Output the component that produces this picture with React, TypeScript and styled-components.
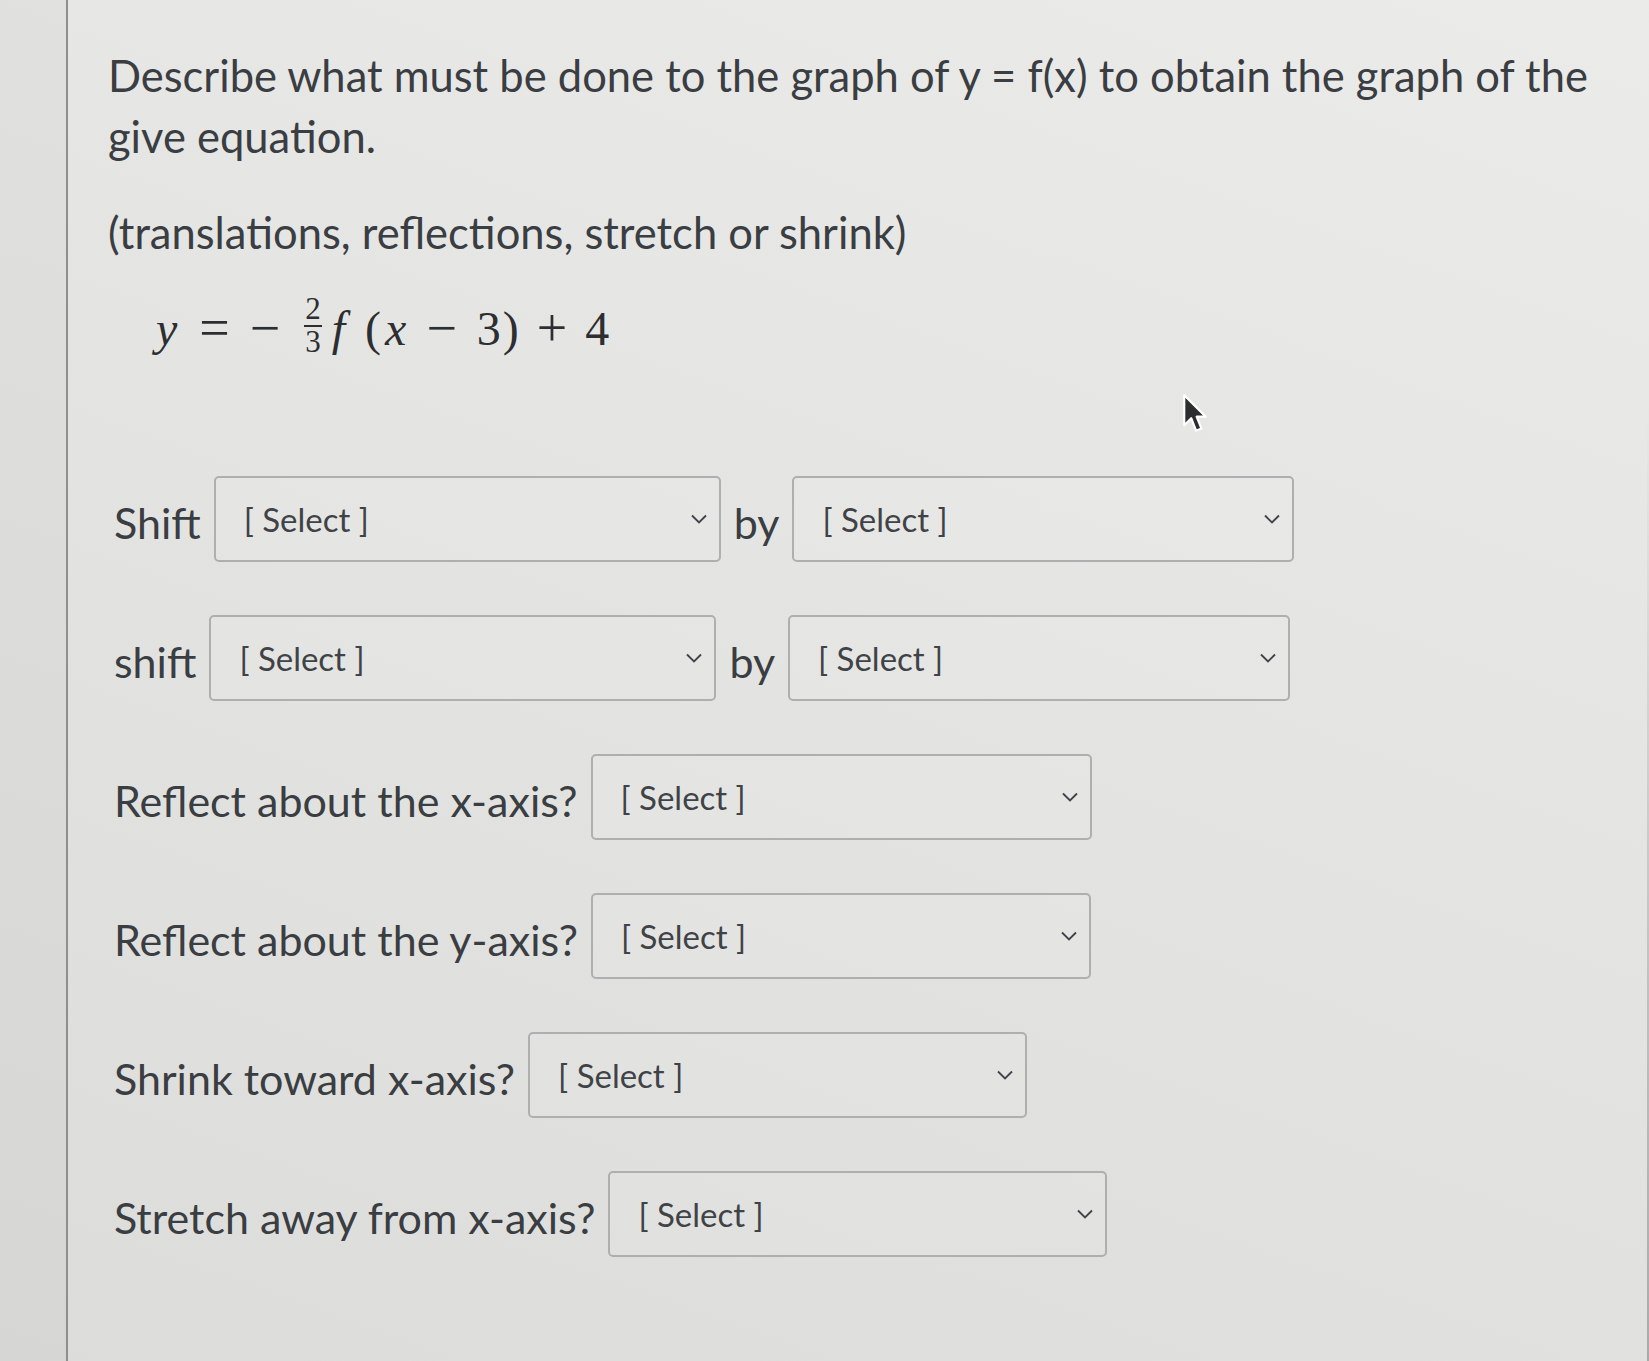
import React from "react";
import styled, { createGlobalStyle } from "styled-components";

const GlobalStyle = createGlobalStyle`
  html, body {
    margin: 0;
    padding: 0;
  }
  body {
    background: #e2e3e1;
    font-family: Lato, "Noto Sans", sans-serif;
    color: #3a3d41;
  }
`;

const Page = styled.div`
  position: relative;
  display: flex;
  min-height: 1361px;
  background: linear-gradient(200deg, #ebebea 0%, #e4e5e3 45%, #dcdddb 100%);
  overflow: hidden;
`;

const Rail = styled.div`
  width: 66px;
  flex-shrink: 0;
  background: rgba(0, 0, 0, 0.025);
  border-right: 2px solid #8e8f8f;
`;

const Content = styled.main`
  flex: 1;
  padding: 45px 0 0 40px;
  border-right: 2px solid;
  border-image: linear-gradient(180deg, rgba(180, 181, 180, 0) 30%, #a9aaa9 100%) 1;
`;

const Question = styled.p`
  margin: 0;
  max-width: 1540px;
  font-size: 43.5px;
  line-height: 61px;
`;

const Hint = styled(Question)`
  margin-top: 35px;
`;

const Equation = styled.div`
  display: flex;
  align-items: center;
  margin-top: 30px;
  padding-left: 48px;
  height: 70px;
  font-family: "Liberation Serif", "DejaVu Serif", serif;
  font-size: 48px;
  color: #2c2e31;
`;

const Sym = styled.span<{ $l?: number; $italic?: boolean; $size?: number }>`
  margin-left: ${(p) => p.$l ?? 0}px;
  font-style: ${(p) => (p.$italic ? "italic" : "normal")};
  font-size: ${(p) => (p.$size ? `${p.$size}px` : "inherit")};
`;

const Frac = styled.span`
  display: inline-flex;
  flex-direction: column;
  align-items: center;
  font-size: 31px;
  line-height: 29px;
  margin: 0 10px 0 24px;
  transform: translateY(-3px);
`;

const FracTop = styled.span`
  padding: 0 1px 2px;
  border-bottom: 2px solid #2c2e31;
`;

const Form = styled.div`
  display: flex;
  flex-direction: column;
  gap: 52px;
  margin-top: 112px;
  padding-left: 6px;
`;

const Row = styled.div`
  display: flex;
  align-items: center;
  gap: 13px;
  height: 87px;
`;

const Label = styled.span`
  font-size: 43px;
  line-height: 50px;
  padding-top: 8px;
  white-space: nowrap;
`;

const SelectBox = styled.div<{ $width: number }>`
  box-sizing: border-box;
  display: flex;
  align-items: center;
  justify-content: space-between;
  width: ${(p) => p.$width}px;
  height: 86px;
  padding: 0 12px 0 28px;
  border: 2px solid #aeafae;
  border-radius: 5px;
  background: rgba(255, 255, 255, 0.08);
  font-size: 33px;
  color: #3f4246;
`;

const Chevron = styled.svg`
  width: 16px;
  height: 10px;
  flex-shrink: 0;
`;

const Cursor = styled.svg`
  position: absolute;
  left: 1181px;
  top: 393px;
  width: 28px;
  height: 43px;
`;

function Select({ width }: { width: number }) {
  return (
    <SelectBox $width={width}>
      <span>[ Select ]</span>
      <Chevron viewBox="0 0 16 10">
        <path d="M1 1.5 L8 8.5 L15 1.5" fill="none" stroke="#404347" strokeWidth="1.9" />
      </Chevron>
    </SelectBox>
  );
}

export default function App() {
  return (
    <Page>
      <GlobalStyle />
      <Rail />
      <Content>
        <Question>
          Describe what must be done to the graph of y = f(x) to obtain the graph of the give equation.
        </Question>
        <Hint>(translations, reflections, stretch or shrink)</Hint>
        <Equation>
          <Sym $italic>y</Sym>
          <Sym $l={22} $size={54}>=</Sym>
          <Sym $l={20} $size={54}>−</Sym>
          <Frac>
            <FracTop>2</FracTop>
            <span>3</span>
          </Frac>
          <Sym $italic>f</Sym>
          <Sym $l={20}>(</Sym>
          <Sym $l={4} $italic>x</Sym>
          <Sym $l={20} $size={54}>−</Sym>
          <Sym $l={20}>3</Sym>
          <Sym $l={2}>)</Sym>
          <Sym $l={18} $size={54}>+</Sym>
          <Sym $l={18}>4</Sym>
        </Equation>
        <Form>
          <Row>
            <Label>Shift</Label>
            <Select width={507} />
            <Label>by</Label>
            <Select width={502} />
          </Row>
          <Row>
            <Label>shift</Label>
            <Select width={507} />
            <Label>by</Label>
            <Select width={502} />
          </Row>
          <Row>
            <Label>Reflect about the x-axis?</Label>
            <Select width={501} />
          </Row>
          <Row>
            <Label>Reflect about the y-axis?</Label>
            <Select width={500} />
          </Row>
          <Row>
            <Label>Shrink toward x-axis?</Label>
            <Select width={499} />
          </Row>
          <Row>
            <Label>Stretch away from x-axis?</Label>
            <Select width={499} />
          </Row>
        </Form>
      </Content>
      <Cursor viewBox="0 0 26 40">
        <path
          d="M3 2 L3 30 L9.5 23.5 L14 35 L19 33 L14.5 22 L23 22 Z"
          fill="#2b2d30"
          stroke="#ffffff"
          strokeWidth="2"
          strokeLinejoin="round"
        />
      </Cursor>
    </Page>
  );
}
